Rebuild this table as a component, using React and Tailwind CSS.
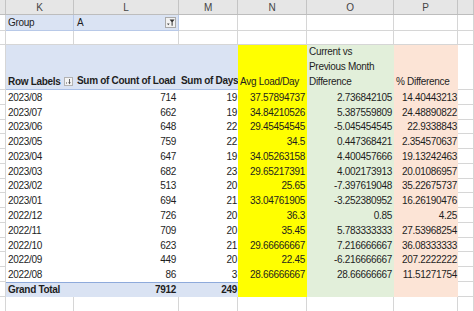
import React from 'react';

const rows = [
  ['2023/08', '714', '19', '37.57894737', '2.736842105', '14.40443213'],
  ['2023/07', '662', '19', '34.84210526', '5.387559809', '24.48890822'],
  ['2023/06', '648', '22', '29.45454545', '-5.045454545', '22.9338843'],
  ['2023/05', '759', '22', '34.5', '0.447368421', '2.354570637'],
  ['2023/04', '647', '19', '34.05263158', '4.400457666', '19.13242463'],
  ['2023/03', '682', '23', '29.65217391', '4.002173913', '20.01086957'],
  ['2023/02', '513', '20', '25.65', '-7.397619048', '35.22675737'],
  ['2023/01', '694', '21', '33.04761905', '-3.252380952', '16.26190476'],
  ['2022/12', '726', '20', '36.3', '0.85', '4.25'],
  ['2022/11', '709', '20', '35.45', '5.783333333', '27.53968254'],
  ['2022/10', '623', '21', '29.66666667', '7.216666667', '36.08333333'],
  ['2022/09', '449', '20', '22.45', '-6.216666667', '207.2222222'],
  ['2022/08', '86', '3', '28.66666667', '28.66666667', '11.51271754'],
];

// column widths J(partial) K L M N O P Q(partial)
const W = ['w-[6px]', 'w-[68px]', 'w-[105px]', 'w-[59px]', 'w-[69px]', 'w-[87px]', 'w-[64px]', 'w-[16px]'];
const grid = 'border-r border-b border-[#d6d6d6] bg-white';

const FilterButton = () => (
  <div className="w-[11px] h-[11px] border border-[#a9a9a9] bg-[#f2f2f2] flex items-center justify-center">
    <svg width="9" height="9" viewBox="0 0 9 9">
      <polygon points="1,5.5 3.6,5.5 2.3,7.3" fill="#444" />
      <polygon points="3.6,1.5 8.6,1.5 6.6,4 6.6,7.8 5.6,7.8 5.6,4" fill="#333" />
    </svg>
  </div>
);

const SortButton = () => (
  <div className="w-[9px] h-[9px] border border-[#b3b3b3] bg-[#f4f4f4] flex items-center justify-center">
    <svg width="7" height="7" viewBox="0 0 7 7">
      <rect x="1" y="4.5" width="1" height="1" fill="#555" />
      <line x1="4.5" y1="1" x2="4.5" y2="5.5" stroke="#555" strokeWidth="0.9" />
      <polygon points="3.2,4.3 5.8,4.3 4.5,6.2" fill="#555" />
    </svg>
  </div>
);

const App = () => {
  return (
    <div
      className="w-[474px] h-[311px] overflow-hidden bg-white text-[10px] tracking-[-0.3px] text-[#1e1e1e]"
      style={{ fontFamily: '"Liberation Sans", Arial, sans-serif' }}
    >
      {/* Column letters */}
      <div className="flex h-[15px] bg-[#e6e6e6] border-b border-[#bdbdbd] text-[#444]">
        {['', 'K', 'L', 'M', 'N', 'O', 'P', ''].map((c, i) => (
          <div key={i} className={`${W[i]} shrink-0 h-full border-r border-[#c4c4c4] flex items-center justify-center`}>
            {c}
          </div>
        ))}
      </div>

      {/* Group filter row */}
      <div className="flex h-[16px]">
        <div className={`${W[0]} shrink-0 ${grid}`} />
        <div className={`${W[1]} shrink-0 bg-[#dae3f3] border-r border-b border-[#b8c9e8] flex items-center pl-[2px]`}>Group</div>
        <div className={`${W[2]} shrink-0 bg-[#dae3f3] border-r border-b border-[#b8c9e8] flex items-center justify-between pl-[3px] pr-[2px]`}>
          <span>A</span>
          <FilterButton />
        </div>
        {[3, 4, 5, 6, 7].map((i) => (
          <div key={i} className={`${W[i]} shrink-0 ${grid}`} />
        ))}
      </div>

      {/* Blank row */}
      <div className="flex h-[14px]">
        {W.map((w, i) => (
          <div key={i} className={`${w} shrink-0 ${grid}`} />
        ))}
      </div>

      {/* Pivot header */}
      <div className="flex h-[45px] font-bold leading-[15px]">
        <div className={`${W[0]} shrink-0 ${grid}`} />
        <div className={`${W[1]} shrink-0 bg-[#dae3f3] border-b border-[#a9bfe6] flex items-end pl-[2px] pb-[1px] whitespace-nowrap`}>
          <div className="flex items-center gap-[3px] h-[14px]">
            <span>Row Labels</span>
            <SortButton />
          </div>
        </div>
        <div className={`${W[2]} shrink-0 bg-[#dae3f3] border-b border-[#a9bfe6] flex items-end pl-[3px] pb-[1px] whitespace-nowrap`}>
          Sum of Count of Load
        </div>
        <div className={`${W[3]} shrink-0 bg-[#dae3f3] border-b border-[#a9bfe6] flex items-end pl-[2px] pb-[1px] whitespace-nowrap`}>
          Sum of Days
        </div>
        <div className={`${W[4]} shrink-0 bg-[#ffff00] flex items-end pl-[2px] pb-[1px] font-normal whitespace-nowrap`}>
          Avg Load/Day
        </div>
        <div className={`${W[5]} shrink-0 bg-[#e2efda] flex flex-col justify-end pl-[2px] pb-[1px] font-normal whitespace-nowrap`}>
          <span>Current vs</span>
          <span>Previous Month</span>
          <span>Difference</span>
        </div>
        <div className={`${W[6]} shrink-0 bg-[#fce4d6] flex items-end pl-[2px] pb-[1px] font-normal whitespace-nowrap`}>
          % Difference
        </div>
        <div className={`${W[7]} shrink-0 ${grid}`} />
      </div>

      {/* Data rows */}
      {rows.map((r) => (
        <div key={r[0]} className="flex h-[14.77px] whitespace-nowrap">
          <div className={`${W[0]} shrink-0 ${grid}`} />
          <div className={`${W[1]} shrink-0 flex items-center pl-[2px]`}>{r[0]}</div>
          <div className={`${W[2]} shrink-0 flex items-center justify-end pr-[3px]`}>{r[1]}</div>
          <div className={`${W[3]} shrink-0 flex items-center justify-end pr-[1px]`}>{r[2]}</div>
          <div className={`${W[4]} shrink-0 bg-[#ffff00] flex items-center justify-end pr-[2px]`}>{r[3]}</div>
          <div className={`${W[5]} shrink-0 bg-[#e2efda] flex items-center justify-end pr-[2px]`}>{r[4]}</div>
          <div className={`${W[6]} shrink-0 bg-[#fce4d6] flex items-center justify-end pr-[1px]`}>{r[5]}</div>
          <div className={`${W[7]} shrink-0 ${grid}`} />
        </div>
      ))}

      {/* Grand total */}
      <div className="flex h-[15px] whitespace-nowrap">
        <div className={`${W[0]} shrink-0 ${grid}`} />
        <div className={`${W[1]} shrink-0 bg-[#dae3f3] border-t border-[#8eaadb] font-bold flex items-center pl-[2px]`}>Grand Total</div>
        <div className={`${W[2]} shrink-0 bg-[#dae3f3] border-t border-[#8eaadb] font-bold flex items-center justify-end pr-[3px]`}>7912</div>
        <div className={`${W[3]} shrink-0 bg-[#dae3f3] border-t border-[#8eaadb] font-bold flex items-center justify-end pr-[1px]`}>249</div>
        <div className={`${W[4]} shrink-0 bg-[#ffff00]`} />
        <div className={`${W[5]} shrink-0 bg-[#e2efda]`} />
        <div className={`${W[6]} shrink-0 bg-[#fce4d6]`} />
        <div className={`${W[7]} shrink-0 ${grid}`} />
      </div>

      {/* Trailing blank row */}
      <div className="flex h-[16px]">
        {W.map((w, i) => (
          <div key={i} className={`${w} shrink-0 ${grid}`} />
        ))}
      </div>
    </div>
  );
};

export default App;
